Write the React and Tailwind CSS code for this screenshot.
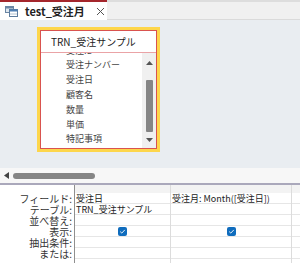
import React from 'react'

const fields = ['受注ID', '受注ナンバー', '受注日', '顧客名', '数量', '単価', '特記事項']
const labels = ['フィールド:', 'テーブル:', '並べ替え:', '表示:', '抽出条件:', 'または:']

function Check() {
  return (
    <div className="w-[9px] h-[9px] rounded-[2px] bg-[#0f6cbd] flex items-center justify-center">
      <svg width="7" height="7" viewBox="0 0 7 7">
        <path d="M1.2 3.6 L2.8 5.1 L5.8 1.9" fill="none" stroke="#fff" strokeWidth="0.9" />
      </svg>
    </div>
  )
}

function Column({ width, cells, last }) {
  return (
    <div className={`${width} ${last ? '' : 'border-r border-[#dcdcdc]'} shrink-0 flex flex-col`}>
      <div className="h-[8px] bg-[#f3f3f3] shrink-0"></div>
      {cells.map((c, i) => (
        <div key={i} className="h-[11px] shrink-0 border-b border-[#e6e6e6] flex items-center px-[1px] text-[9px] leading-[11px] text-[#222] whitespace-nowrap">
          {c === 'check' ? <div className="w-full flex justify-center"><Check /></div> : c}
        </div>
      ))}
    </div>
  )
}

export default function App() {
  return (
    <div className="w-[300px] h-[263px] overflow-hidden flex flex-col bg-white font-['Noto_Sans_CJK_JP',sans-serif]">
      {/* tab bar */}
      <div className="h-[20px] shrink-0 bg-[#f0f0f0] border-t-2 border-[#dddddd] border-b border-b-[#dadada] flex">
        <div className="w-[107px] -mt-[2px] h-[20px] bg-white border-t-2 border-[#a4262c] flex items-center pl-[5px]">
          <svg width="13" height="11" viewBox="0 0 13 11">
            <rect x="0.5" y="0.5" width="8" height="6" fill="#dfe7ef" stroke="#6a86a4" />
            <rect x="0.5" y="0.5" width="8" height="2" fill="#6a86a4" />
            <rect x="4.5" y="3.5" width="8" height="7" fill="#fff" stroke="#5d7b9c" />
            <rect x="4.5" y="3.5" width="8" height="2" fill="#4f7fb3" />
            <line x1="5" y1="8" x2="12" y2="8" stroke="#9fb2c6" strokeWidth="0.8" />
          </svg>
          <span className="ml-[7px] text-[11px] font-bold text-[#222] leading-none">test_受注月</span>
          <svg className="ml-[11px]" width="9" height="9" viewBox="0 0 9 9">
            <path d="M1 1 L8 8 M8 1 L1 8" stroke="#555" strokeWidth="1" />
          </svg>
        </div>
      </div>

      {/* upper pane */}
      <div className="h-[148px] shrink-0 bg-[#e9edf1] pl-[37px] pt-[7px]">
        <div className="w-[123px] h-[125px] border-[3px] border-[#fdd64b]">
          <div className="w-full h-full border border-[#d9534f] bg-white flex flex-col">
            <div className="h-[22px] shrink-0 border-b border-[#eaa3a6] flex items-center pl-[10px] text-[10px] text-[#222] relative z-10 bg-white">
              TRN_受注サンプル
            </div>
            <div className="flex-1 flex overflow-hidden">
              <div className="flex-1 overflow-hidden">
                <div className="-mt-[10px] pl-[25px]">
                  {fields.map((f) => (
                    <div key={f} className="h-[14.8px] flex items-center text-[9px] text-[#444] whitespace-nowrap">{f}</div>
                  ))}
                </div>
              </div>
              <div className="w-[14px] bg-[#f0f0f0] flex flex-col items-center pt-[8px] pb-[6px]">
                <svg width="7" height="4" viewBox="0 0 7 4"><path d="M0 4 L3.5 0 L7 4 Z" fill="#555" /></svg>
                <div className="w-[7px] h-[52px] mt-[15px] bg-[#858585] rounded-[1px]"></div>
                <div className="flex-1"></div>
                <svg width="7" height="4" viewBox="0 0 7 4"><path d="M0 0 L3.5 4 L7 0 Z" fill="#555" /></svg>
              </div>
            </div>
          </div>
        </div>
      </div>

      {/* horizontal scrollbar */}
      <div className="h-[15px] shrink-0 bg-[#f7f7f7] flex items-center pl-[4px]">
        <svg width="5" height="7" viewBox="0 0 5 7"><path d="M5 0 L0 3.5 L5 7 Z" fill="#444" /></svg>
        <div className="ml-[4px] w-[82px] h-[6px] rounded-full bg-[#858585]"></div>
      </div>
      <div className="h-[2px] shrink-0 bg-[#aaa8bb]"></div>

      {/* query grid */}
      <div className="flex-1 flex overflow-hidden">
        <div className="w-[75px] shrink-0 border-r border-[#8f8f8f] flex flex-col pt-[8px]">
          {labels.map((l) => (
            <div key={l} className="h-[11px] shrink-0 overflow-visible text-right pr-[2px] text-[10px] leading-[11px] text-[#333] whitespace-nowrap">{l}</div>
          ))}
        </div>
        <Column width="w-[96px]" cells={['受注日', 'TRN_受注サンプル', '', 'check', '', '', '']} />
        <Column width="w-[121px]" cells={['受注月: Month([受注日])', '', '', 'check', '', '', '']} />
        <Column width="flex-1" cells={['', '', '', '', '', '', '']} last />
      </div>
    </div>
  )
}
